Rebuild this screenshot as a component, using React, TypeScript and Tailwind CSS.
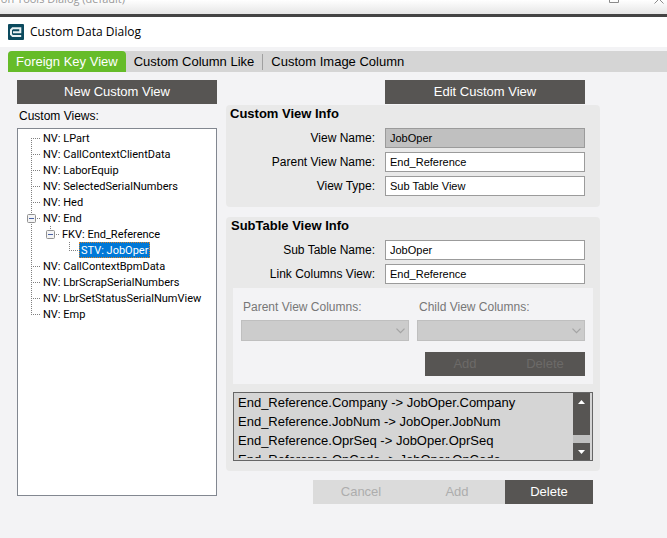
import React from 'react';
import { useState } from 'react';

type TreeNode = {
  label: string;
  level: number;
  expander?: boolean;
  last?: boolean;
};

const treeNodes: TreeNode[] = [
  { label: 'NV: LPart', level: 0 },
  { label: 'NV: CallContextClientData', level: 0 },
  { label: 'NV: LaborEquip', level: 0 },
  { label: 'NV: SelectedSerialNumbers', level: 0 },
  { label: 'NV: Hed', level: 0 },
  { label: 'NV: End', level: 0, expander: true },
  { label: 'FKV: End_Reference', level: 1, expander: true, last: true },
  { label: 'STV: JobOper', level: 2, last: true },
  { label: 'NV: CallContextBpmData', level: 0 },
  { label: 'NV: LbrScrapSerialNumbers', level: 0 },
  { label: 'NV: LbrSetStatusSerialNumView', level: 0 },
  { label: 'NV: Emp', level: 0, last: true },
];

const tabs = ['Foreign Key View', 'Custom Column Like', 'Custom Image Column'];

const columnLinks = [
  'End_Reference.Company -> JobOper.Company',
  'End_Reference.JobNum -> JobOper.JobNum',
  'End_Reference.OprSeq -> JobOper.OprSeq',
  'End_Reference.OpCode -> JobOper.OpCode',
];

// Dotted guide lines and the +/- box in front of a tree row
const TreeLines: React.FC<{ node: TreeNode; first: boolean }> = ({ node, first }) => {
  const x = 13 + node.level * 19;
  const width = 22 + node.level * 19;

  return (
    <svg width={width} height="16" viewBox={`0 0 ${width} 16`} className="shrink-0" aria-hidden="true">
      <g stroke="#808080" strokeDasharray="1 1" fill="none">
        {node.level > 0 && <path d="M13.5 0V16" />}
        <path d={`M${x + 0.5} ${first ? 8 : 0}V${node.last ? 9 : 16}`} />
        <path d={`M${x} 8.5H${width}`} />
      </g>
      {node.expander && (
        <g>
          <rect x={x - 3.5} y="4.5" width="8" height="8" rx="1" fill="#f4f4f4" stroke="#919191" />
          <path d={`M${x - 2} 8.5H${x + 3}`} stroke="#4b63a7" />
        </g>
      )}
    </svg>
  );
};

const Field: React.FC<{ id: string; label: string; value: string; disabled?: boolean }> = ({
  id,
  label,
  value,
  disabled,
}) => (
  <div className="flex items-center gap-[10px]">
    <label htmlFor={id} className="flex-1 text-right text-[12px] leading-5">
      {label}
    </label>
    <input
      id={id}
      type="text"
      defaultValue={value}
      disabled={disabled}
      className="h-5 w-[200px] border border-[#9b9b9b] bg-white px-1 text-[11px] text-black disabled:bg-[#c0c0c0]"
    />
  </div>
);

const ColumnSelect: React.FC<{ id: string; label: string }> = ({ id, label }) => (
  <div className="flex-1">
    <label htmlFor={id} className="block px-[2px] text-[12px] leading-5 text-[#777777]">
      {label}
    </label>
    <div className="relative mt-[3px]">
      <select id={id} disabled className="block h-[21px] w-full appearance-none border border-[#bfbfbf] bg-[#cccccc]" />
      <svg width="9" height="6" viewBox="0 0 9 6" className="absolute right-1 top-2" fill="none" stroke="#a3a3a3" strokeWidth="1.2" aria-hidden="true">
        <path d="M0.5 0.7L4.5 4.7L8.5 0.7" />
      </svg>
    </div>
  </div>
);

export default function App() {
  const [activeTab, setActiveTab] = useState(tabs[0]);
  const [selected, setSelected] = useState('STV: JobOper');

  return (
    <div className="min-h-screen bg-[#f3f3f5] font-['Liberation_Sans',sans-serif] text-black">
      {/* Parent window behind the dialog */}
      <div className="flex h-[14px] items-start justify-between overflow-hidden bg-linear-to-b from-white to-[#e6e6e6]">
        <div className="-mt-[9px] flex w-[125px] justify-end whitespace-nowrap font-['Open_Sans',sans-serif] text-[11px] leading-4 text-[#999999]">
          on Tools Dialog (default)
        </div>
        <svg width="58" height="4" viewBox="0 0 58 4" fill="none" stroke="#8a8a8a" aria-hidden="true">
          <path d="M0.5 0V2.5H9.5V0" />
          <path d="M45.5 3.5L50 -1L54.5 3.5" />
        </svg>
      </div>

      {/* Title bar */}
      <header className="flex h-[33px] items-center gap-[6px] border-t-3 border-[#444444] bg-white px-2">
        <svg width="16" height="16" viewBox="0 0 16 16" aria-hidden="true">
          <rect width="16" height="16" rx="1" fill="#0b4a5e" />
          <path d="M5 8.2H12.3V4.3H4.6L3 5.9V10.4L4.6 12H13.2" fill="none" stroke="#e9f1f3" strokeWidth="2" />
        </svg>
        <h1 className="font-['Open_Sans',sans-serif] text-[12px] leading-4">Custom Data Dialog</h1>
      </header>

      <main className="pl-2 pt-1">
        {/* Tabs */}
        <nav className="flex h-[21px] items-center rounded-tl-[4px] bg-[#d5d5d5] text-[13px]">
          {tabs.map((tab, index) => (
            <React.Fragment key={tab}>
              {index === 2 && <span className="h-4 w-px bg-[#a0a0a0]" />}
              <button
                onClick={() => setActiveTab(tab)}
                className={`h-full whitespace-nowrap px-2 ${
                  activeTab === tab ? 'rounded-t-[4px] bg-[#66bc29] text-white' : 'text-black'
                }`}
              >
                {tab}
              </button>
            </React.Fragment>
          ))}
        </nav>

        <div className="flex gap-[9px] px-[9px] pt-2">
          {/* Custom views */}
          <section className="flex w-[200px] shrink-0 flex-col pb-2">
            <button className="h-6 bg-[#575553] text-[13px] text-white">New Custom View</button>
            <h2 className="px-[2px] py-[2px] text-[12px] leading-5">Custom Views:</h2>
            <ul className="flex-1 border border-[#828790] bg-white pt-px text-[11px]">
              {treeNodes.map((node, index) => (
                <li key={node.label} className="flex h-4 items-center gap-px">
                  <TreeLines node={node} first={index === 0} />
                  <button
                    onClick={() => setSelected(node.label)}
                    className={`h-4 whitespace-nowrap px-[2px] pt-px font-['Roboto',sans-serif] leading-4 ${
                      selected === node.label
                        ? 'bg-[#0078d7] text-white outline-1 -outline-offset-1 outline-dotted outline-[#d9822b]'
                        : ''
                    }`}
                  >
                    {node.label}
                  </button>
                </li>
              ))}
            </ul>
          </section>

          {/* View details */}
          <div className="max-w-[374px] flex-1">
            <div className="flex justify-end pr-[15px]">
              <button className="h-6 w-[200px] bg-[#575553] text-[13px] text-white">Edit Custom View</button>
            </div>

            <section className="mt-px rounded-[4px] bg-[#e9e9e9] pb-[11px] pl-1 pr-[15px]">
              <h2 className="h-[23px] pt-px text-[13px] font-bold leading-4">Custom View Info</h2>
              <div className="space-y-1">
                <Field id="view-name" label="View Name:" value="JobOper" disabled />
                <Field id="parent-view" label="Parent View Name:" value="End_Reference" />
                <Field id="view-type" label="View Type:" value="Sub Table View" />
              </div>
            </section>

            <section className="mt-[10px] rounded-[4px] bg-[#e9e9e9] pb-[10px] pl-[5px] pr-[7px]">
              <h2 className="h-[23px] pt-px text-[13px] font-bold leading-4">SubTable View Info</h2>
              <div className="space-y-1 pr-2">
                <Field id="sub-table" label="Sub Table Name:" value="JobOper" />
                <Field id="link-view" label="Link Columns View:" value="End_Reference" />
              </div>

              <div className="ml-[2px] mt-1 bg-[#f3f3f5] p-2">
                <div className="flex gap-2 pt-px">
                  <ColumnSelect id="parent-columns" label="Parent View Columns:" />
                  <ColumnSelect id="child-columns" label="Child View Columns:" />
                </div>
                <div className="mt-[11px] flex justify-end text-[13px] text-[#6c6a68]">
                  <button disabled className="h-6 w-20 bg-[#575553]">Add</button>
                  <button disabled className="h-6 w-20 bg-[#575553]">Delete</button>
                </div>
              </div>

              {/* Linked columns */}
              <div className="ml-[2px] mt-2 flex border border-[#666666] bg-[#d5d5d5] pr-[2px]">
                <ul className="mb-[2px] h-[65px] flex-1 overflow-hidden pl-1 text-[13px] leading-[19px]">
                  {columnLinks.map((link) => (
                    <li key={link}>{link}</li>
                  ))}
                </ul>
                <div className="flex w-[17px] flex-col justify-between bg-[#c0c0c0]">
                  <button aria-label="Scroll up" className="flex h-[42px] justify-center bg-[#575553] pt-[7px]">
                    <svg width="7" height="4" viewBox="0 0 7 4" fill="#ffffff" aria-hidden="true">
                      <path d="M3.5 0L7 4H0Z" />
                    </svg>
                  </button>
                  <button aria-label="Scroll down" className="flex h-[17px] items-center justify-center bg-[#575553]">
                    <svg width="7" height="4" viewBox="0 0 7 4" fill="#ffffff" aria-hidden="true">
                      <path d="M0 0H7L3.5 4Z" />
                    </svg>
                  </button>
                </div>
              </div>
            </section>

            <div className="mt-[9px] flex justify-end pr-[7px] text-[13px]">
              <button disabled className="h-6 w-24 bg-[#dbdbdb] text-[#adadad]">Cancel</button>
              <button disabled className="h-6 w-24 bg-[#dbdbdb] text-[#adadad]">Add</button>
              <button className="h-6 w-[88px] bg-[#575553] text-white">Delete</button>
            </div>
          </div>
        </div>
      </main>
    </div>
  );
}
